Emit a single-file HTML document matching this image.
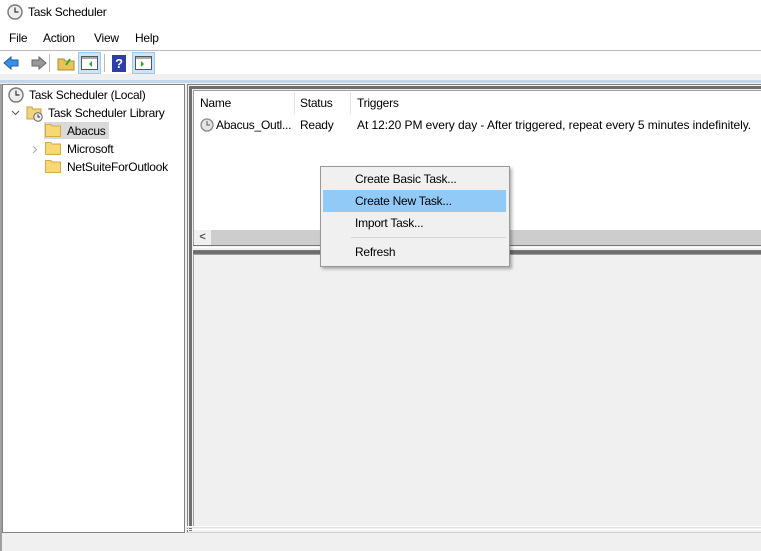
<!DOCTYPE html>
<html><head><style>
*{margin:0;padding:0;box-sizing:border-box}
body{width:761px;height:551px;overflow:hidden;background:#fff;font-family:"Liberation Sans",sans-serif;font-size:12px;color:#000;position:relative;letter-spacing:-0.25px}
.a{position:absolute;white-space:nowrap}
</style></head><body>
<svg class="a" style="left:7px;top:4px" width="16" height="16"><circle cx="8" cy="8" r="7" fill="#eee" stroke="#777" stroke-width="1.4"/><path d="M8 3.5V8H11.5" stroke="#333" stroke-width="1.2" fill="none"/></svg>
<div class="a" style="left:28px;top:5px">Task Scheduler</div>
<div class="a" style="left:9px;top:31px">File</div>
<div class="a" style="left:43px;top:31px">Action</div>
<div class="a" style="left:94px;top:31px">View</div>
<div class="a" style="left:135px;top:31px">Help</div>
<div class="a" style="left:0;top:50px;width:761px;height:1px;background:#bcbcbc"></div>
<svg class="a" style="left:3px;top:55px" width="44" height="16"><path d="M1 8L8 2V5H15V11H8V14Z" fill="#3a8ee6" stroke="#1f5fa8"/><path d="M43 8L36 2V5H29V11H36V14Z" fill="#999" stroke="#666"/></svg>
<div class="a" style="left:49px;top:54px;width:1px;height:18px;background:#bbb"></div>
<svg class="a" style="left:57px;top:55px" width="18" height="16"><path d="M1 4H7L8 6H17V15H1Z" fill="#e9c25a" stroke="#b28a2a"/><path d="M9 10L13 4" stroke="#3a3" stroke-width="2"/></svg>
<div class="a" style="left:78px;top:52px;width:23px;height:22px;background:#cce4f7;border:1px solid #99c9ef"></div>
<svg class="a" style="left:81px;top:56px" width="17" height="14"><rect x=".5" y=".5" width="16" height="13" fill="#fff" stroke="#555"/><rect x="1" y="1" width="15" height="2" fill="#aaa"/><path d="M11 5L8 8L11 11Z" fill="#2a2"/></svg>
<div class="a" style="left:104px;top:54px;width:1px;height:18px;background:#bbb"></div>
<div class="a" style="left:112px;top:55px;width:14px;height:17px;background:#2d3ea8;color:#fff;font-weight:bold;font-size:13px;text-align:center;line-height:17px">?</div>
<div class="a" style="left:132px;top:52px;width:23px;height:22px;background:#cce4f7;border:1px solid #99c9ef"></div>
<svg class="a" style="left:135px;top:56px" width="17" height="14"><rect x=".5" y=".5" width="16" height="13" fill="#fff" stroke="#555"/><rect x="1" y="1" width="15" height="2" fill="#aaa"/><path d="M6 5L9 8L6 11Z" fill="#2a2"/></svg>
<div class="a" style="left:0;top:74px;width:761px;height:477px;background:#f0f0f0"></div>
<div class="a" style="left:0;top:80px;width:761px;height:3px;background:#c3d6ec"></div>
<div class="a" style="left:2px;top:84px;width:183px;height:449px;background:#fff;border:1px solid #828282"></div>
<div class="a" style="left:0;top:84px;width:2px;height:467px;background:#a0a0a0"></div>
<svg class="a" style="left:8px;top:87px" width="16" height="16"><circle cx="8" cy="8" r="7" fill="#eee" stroke="#777" stroke-width="1.4"/><path d="M8 3.5V8H11.5" stroke="#333" stroke-width="1.2" fill="none"/></svg>
<div class="a" style="left:29px;top:88px">Task Scheduler (Local)</div>
<svg class="a" style="left:11px;top:110px" width="9" height="6"><path d="M1 1L4.5 4.5L8 1" stroke="#555" fill="none"/></svg>
<svg class="a" style="left:26px;top:104px" width="18" height="18"><path d="M1 3H6L7 5H15V15H1Z" fill="#f0d37a" stroke="#c9a24a"/><circle cx="12" cy="13" r="4.2" fill="#eee" stroke="#666"/><path d="M12 10.5V13H14" stroke="#333" fill="none"/></svg>
<div class="a" style="left:48px;top:106px">Task Scheduler Library</div>
<div class="a" style="left:44px;top:122px;width:65px;height:17px;background:#d9d9d9"></div>
<svg class="a" style="left:45px;top:123px" width="16" height="14"><path d="M.5 1.5H6L7 3H15.5V13.5H.5Z" fill="#f8d775" stroke="#d4aa4a"/></svg>
<div class="a" style="left:67px;top:124px">Abacus</div>
<svg class="a" style="left:32px;top:145px" width="6" height="9"><path d="M1 1L4.5 4.5L1 8" stroke="#aaa" fill="none"/></svg>
<svg class="a" style="left:45px;top:141px" width="16" height="14"><path d="M.5 1.5H6L7 3H15.5V13.5H.5Z" fill="#f8d775" stroke="#d4aa4a"/></svg>
<div class="a" style="left:67px;top:142px">Microsoft</div>
<svg class="a" style="left:45px;top:159px" width="16" height="14"><path d="M.5 1.5H6L7 3H15.5V13.5H.5Z" fill="#f8d775" stroke="#d4aa4a"/></svg>
<div class="a" style="left:67px;top:160px">NetSuiteForOutlook</div>
<div class="a" style="left:187px;top:84px;width:574px;height:449px;border-left:1px solid #828282;border-top:1px solid #828282"></div>
<div class="a" style="left:189px;top:86px;width:572px;height:445px;border-left:3px solid #6e6e6e;border-top:3px solid #6e6e6e"></div>
<div class="a" style="left:193px;top:90px;width:568px;height:155px;background:#fff;border-left:1px solid #a0a0a0;border-top:1px solid #a0a0a0"></div>
<div class="a" style="left:294px;top:92px;width:1px;height:22px;background:#e5e5e5"></div>
<div class="a" style="left:350px;top:92px;width:1px;height:22px;background:#e5e5e5"></div>
<div class="a" style="left:200px;top:96px">Name</div>
<div class="a" style="left:300px;top:96px">Status</div>
<div class="a" style="left:357px;top:96px">Triggers</div>
<svg class="a" style="left:200px;top:118px" width="14" height="14"><circle cx="7" cy="7" r="6" fill="#e5e5e5" stroke="#888" stroke-width="1.3"/><path d="M7 3V7H10" stroke="#555" fill="none"/></svg>
<div class="a" style="left:216px;top:118px">Abacus_Outl...</div>
<div class="a" style="left:300px;top:118px">Ready</div>
<div class="a" style="left:357px;top:118px;letter-spacing:-0.06px">At 12:20 PM every day - After triggered, repeat every 5 minutes indefinitely.</div>
<div class="a" style="left:194px;top:230px;width:567px;height:15px;background:#cdcdcd"></div>
<div class="a" style="left:194px;top:230px;width:17px;height:15px;background:#f0f0f0;color:#555;font-size:11px;font-weight:bold;text-align:center;line-height:14px">&lt;</div>
<div class="a" style="left:193px;top:245px;width:568px;height:1px;background:#777"></div>
<div class="a" style="left:193px;top:247px;width:568px;height:1px;background:#fff"></div>
<div class="a" style="left:193px;top:250px;width:568px;height:1px;background:#777"></div>
<div class="a" style="left:193px;top:251px;width:568px;height:3px;background:#6e6e6e"></div>
<div class="a" style="left:193px;top:254px;width:568px;height:1px;background:#a0a0a0"></div>
<div class="a" style="left:193px;top:254px;width:1px;height:273px;background:#a0a0a0"></div>
<div class="a" style="left:186px;top:526px;width:575px;height:1px;background:#fff"></div>
<div class="a" style="left:186px;top:527px;width:575px;height:1px;background:#e0e0e0"></div>
<div class="a" style="left:186px;top:529px;width:575px;height:1px;background:#fff"></div>
<div class="a" style="left:186px;top:532px;width:575px;height:1px;background:#d0d0d0"></div>
<div class="a" style="left:320px;top:166px;width:190px;height:101px;background:#f0f0f0;border:1px solid #979797;box-shadow:2px 2px 3px rgba(0,0,0,.3)"></div>
<div class="a" style="left:323px;top:190px;width:183px;height:22px;background:#91c9f7"></div>
<div class="a" style="left:355px;top:172px">Create Basic Task...</div>
<div class="a" style="left:355px;top:194px">Create New Task...</div>
<div class="a" style="left:355px;top:216px">Import Task...</div>
<div class="a" style="left:351px;top:237px;width:155px;height:1px;background:#d7d7d7"></div>
<div class="a" style="left:355px;top:245px">Refresh</div>
</body></html>
